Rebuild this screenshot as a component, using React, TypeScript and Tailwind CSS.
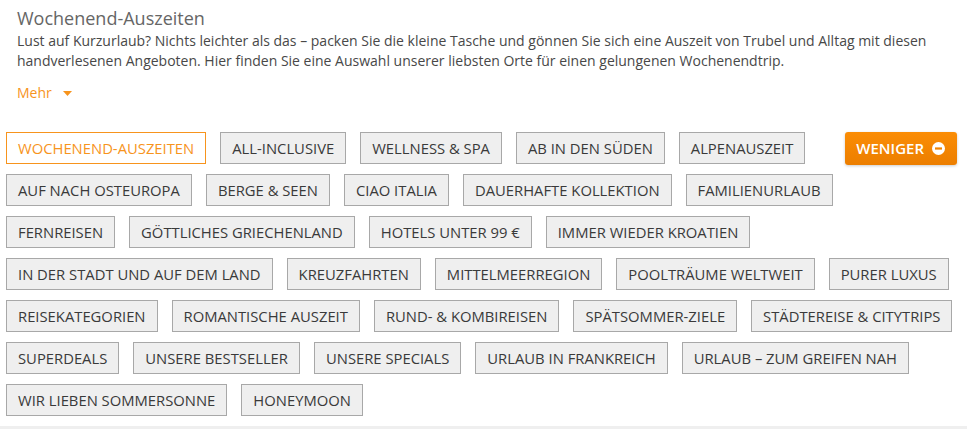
import React from 'react';

const rows: string[][] = [
  ['WOCHENEND-AUSZEITEN', 'ALL-INCLUSIVE', 'WELLNESS & SPA', 'AB IN DEN SÜDEN', 'ALPENAUSZEIT'],
  ['AUF NACH OSTEUROPA', 'BERGE & SEEN', 'CIAO ITALIA', 'DAUERHAFTE KOLLEKTION', 'FAMILIENURLAUB'],
  ['FERNREISEN', 'GÖTTLICHES GRIECHENLAND', 'HOTELS UNTER 99 €', 'IMMER WIEDER KROATIEN'],
  ['IN DER STADT UND AUF DEM LAND', 'KREUZFAHRTEN', 'MITTELMEERREGION', 'POOLTRÄUME WELTWEIT', 'PURER LUXUS'],
  ['REISEKATEGORIEN', 'ROMANTISCHE AUSZEIT', 'RUND- & KOMBIREISEN', 'SPÄTSOMMER-ZIELE', 'STÄDTEREISE & CITYTRIPS'],
  ['SUPERDEALS', 'UNSERE BESTSELLER', 'UNSERE SPECIALS', 'URLAUB IN FRANKREICH', 'URLAUB – ZUM GREIFEN NAH'],
  ['WIR LIEBEN SOMMERSONNE', 'HONEYMOON'],
];

const Tag: React.FC<{ label: string; active?: boolean }> = ({ label, active }) => (
  <a
    href="#"
    className={
      active
        ? 'block h-8 border border-[#f7941d] bg-white px-[11px] text-[14.8px] leading-[30px] text-[#f7941d] whitespace-nowrap'
        : 'block h-8 border border-[#a8a8a8] bg-[#efefef] px-[11px] text-[14.8px] leading-[30px] text-[#3a3a3a] whitespace-nowrap'
    }
  >
    {label}
  </a>
);

export default function App() {
  return (
    <div className="bg-white font-['Open_Sans',sans-serif]">
      {/* Intro */}
      <div className="pl-[17px] pr-[30px] pt-[6px]">
        <h1 className="text-[18px] leading-6 text-[#666]">Wochenend-Auszeiten</h1>
        <p className="mt-px text-[14px] leading-5 text-[#484848]">
          Lust auf Kurzurlaub? Nichts leichter als das – packen Sie die kleine Tasche und gönnen Sie sich eine Auszeit von
          Trubel und Alltag mit diesen handverlesenen Angeboten. Hier finden Sie eine Auswahl unserer liebsten Orte für einen
          gelungenen Wochenendtrip.
        </p>
        <a href="#" className="mt-[12px] flex items-center gap-[11px] text-[14px] leading-5 text-[#f7941d]">
          Mehr
          <svg width="9" height="5" viewBox="0 0 9 5">
            <path d="M0 0h9L4.5 5z" fill="#f7941d" />
          </svg>
        </a>
      </div>

      {/* Tags */}
      <div className="mt-[29px] flex flex-col gap-[10px] pl-[6px] pr-[10px]">
        {rows.map((row, i) => (
          <div key={i} className="flex h-8 items-start gap-[14px]">
            {row.map((label) => (
              <Tag key={label} label={label} active={label === 'WOCHENEND-AUSZEITEN'} />
            ))}
            {i === 0 && (
              <button className="ml-auto flex h-[33px] shrink-0 items-center gap-[8px] rounded-[3px] bg-gradient-to-b from-[#fb8d05] to-[#ec7e00] pl-[11px] pr-[12px] text-[15px] font-semibold text-white shadow-[0_1px_3px_rgba(0,0,0,0.2)]">
                WENIGER
                <svg width="13" height="13" viewBox="0 0 13 13">
                  <circle cx="6.5" cy="6.5" r="6.5" fill="#fff" />
                  <rect x="3" y="5.4" width="7" height="2.2" fill="#f28400" />
                </svg>
              </button>
            )}
          </div>
        ))}
      </div>

      <div className="mt-[10px] h-4 bg-[#efefef]" />
    </div>
  );
}
